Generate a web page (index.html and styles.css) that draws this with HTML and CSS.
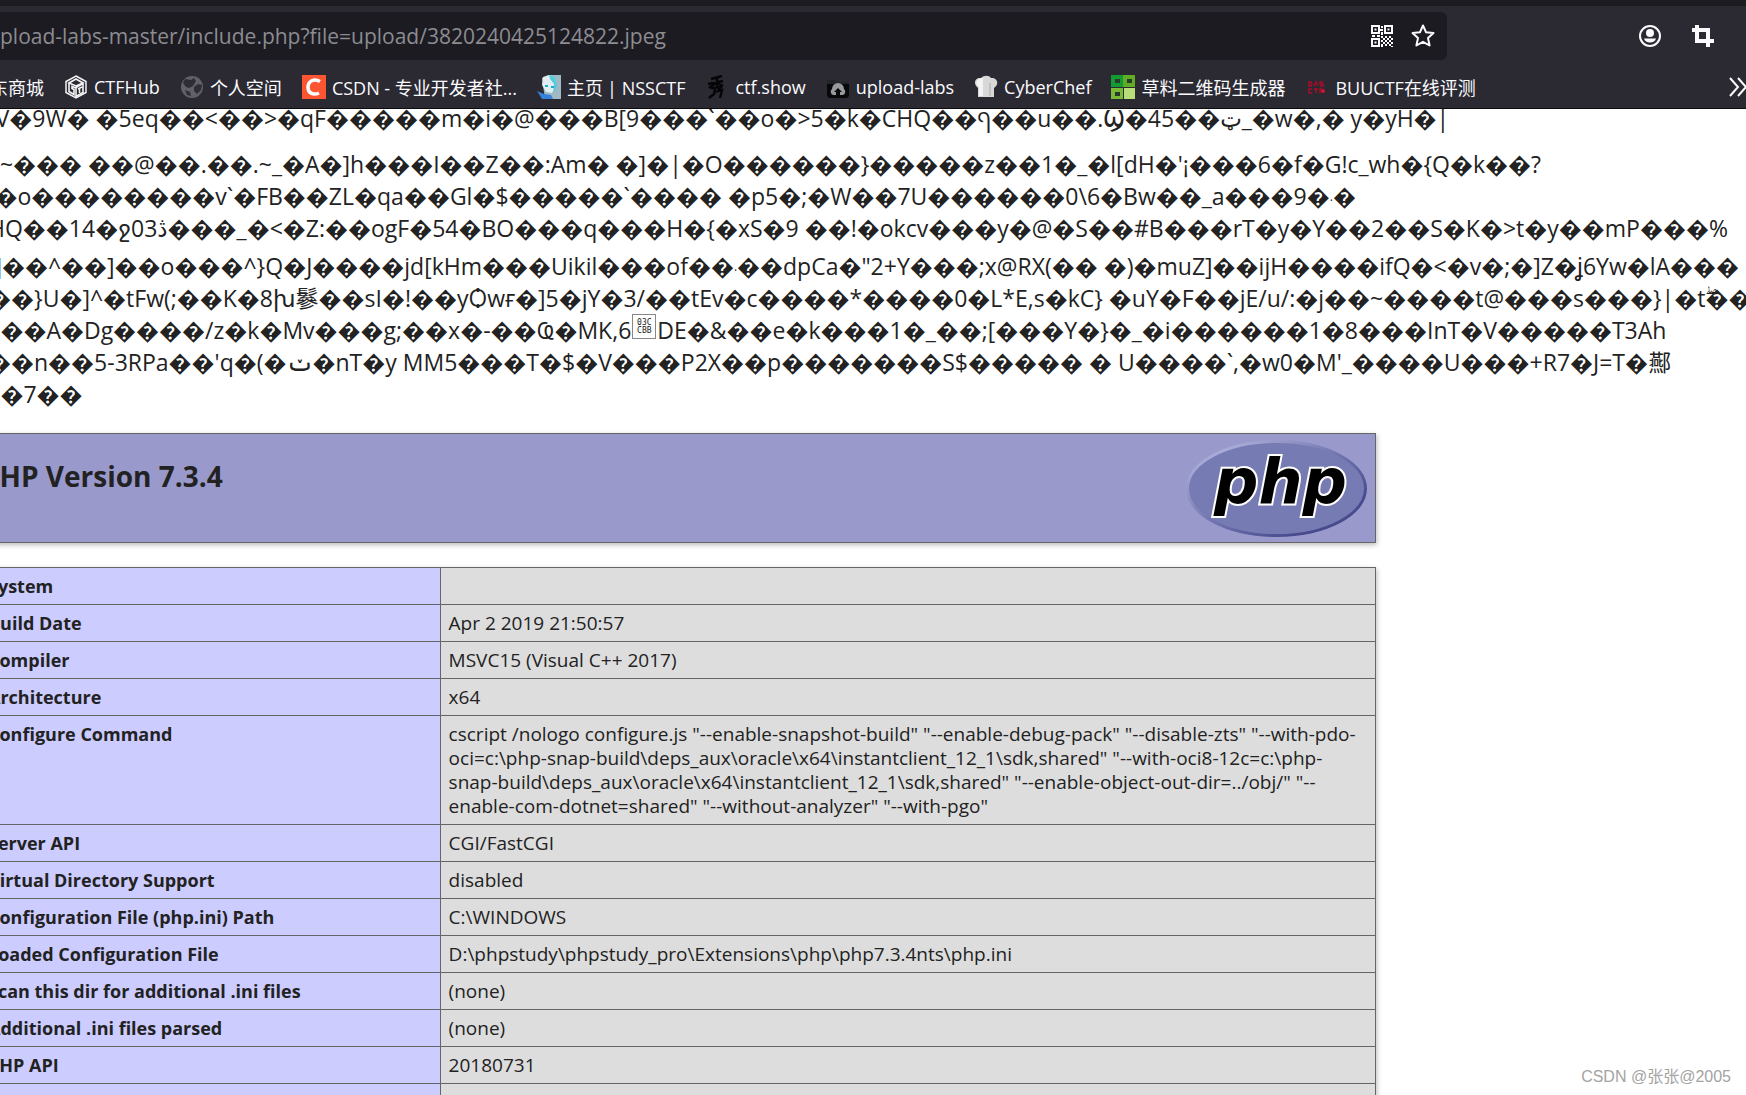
FILE: index.html
```
<!DOCTYPE html>
<html lang="zh-CN">
<head>
<meta charset="utf-8">
<title>PHP 7.3.4 - phpinfo()</title>
<link rel="stylesheet" href="styles.css">
</head>
<body>
<header class="chrome">
  <div class="tabstrip"></div>
  <div class="toolbar">
    <div class="urlbar">
      <input class="url" type="text" aria-label="Address" value="pload-labs-master/include.php?file=upload/3820240425124822.jpeg">
      <button class="tool" type="button" aria-label="QR code">
        <svg width="22" height="22" viewBox="0 0 22 22" fill="#fbfbfe" fill-rule="evenodd"><path d="M0 0h9v9H0zM2 2v5h5V2zM13 0h9v9h-9zM15 2v5h5V2zM0 13h9v9H0zM2 15v5h5v-5zM3.500 3.500h2v2h-2zM16.500 3.500h2v2h-2zM3.500 16.500h2v2h-2zM10 1h2v2h-2zM9 4h3v2H9zM10 7h2v3h-2zM1 10h3v2H1zM6 10h3v2H6zM10 11h2v2h-2zM12 13h2v2h-2zM14 11h2v2h-2zM16 13h2v2h-2zM18 11h2v2h-2zM20 13h2v2h-2zM10 15h2v2h-2zM14 15h2v2h-2zM18 15h2v2h-2zM12 17h2v2h-2zM16 17h2v2h-2zM20 17h2v2h-2zM10 19h2v3h-2zM14 19h2v2h-2zM18 19h2v2h-2zM20 21h2v1h-2z"/></svg>
      </button>
      <button class="tool" type="button" aria-label="Bookmark this page">
        <svg width="24" height="24" viewBox="0 0 24 24" fill="none" stroke="#fbfbfe" stroke-width="2" stroke-linejoin="round"><path d="M12 1.500l3.100 6.800 7.400.800-5.500 5 1.600 7.400L12 17.800l-6.600 3.700L7 14.100l-5.500-5 7.400-.800z"/></svg>
      </button>
    </div>
    <div class="actions">
      <button class="tool" type="button" aria-label="Account">
        <svg width="24" height="24" viewBox="0 0 24 24"><circle cx="12" cy="12" r="10" fill="none" stroke="#fbfbfe" stroke-width="2"/><circle cx="12" cy="9" r="4" fill="#fbfbfe"/><path d="M6 14.500h12c-.600 2.500-3 4-6 4s-5.400-1.500-6-4z" fill="#fbfbfe"/></svg>
      </button>
      <button class="tool" type="button" aria-label="Screenshot">
        <svg width="22" height="22" viewBox="0 0 22 22" fill="none" stroke="#fbfbfe" stroke-width="4"><path d="M5 0v16h17M0 5h16v17"/></svg>
      </button>
    </div>
  </div>
  <nav class="bookmarks" aria-label="Bookmarks">
    <a class="mark" href="#">东商城</a>
    <a class="mark" href="#">
      <svg width="24" height="24" viewBox="0 0 24 24" fill="none" stroke="#f4f4f6"><path d="M12 1l10 5.500v11L12 23 2 17.500v-11z" stroke-width="1.500"/><path d="M12 4l7 4-7 3-7-3zM5 8.500v8l5 3v-5l-2-1v-2l4 1.500v8.500l7-4V8.500l-7 4M14 14l4-2M15.500 13v5" stroke-width="1.600"/></svg>
      <span class="latin">CTFHub</span></a>
    <a class="mark" href="#">
      <svg width="24" height="24" viewBox="0 0 24 24"><circle cx="12" cy="12" r="11" fill="#606068"/><path d="M5 4l6 1 3-2 2 3-3 5-4 2-3-1-3-4zM14 12l4-3 4 1-1 5-4 4-3-3zM5 15l5 2 1 4-4-1z" fill="#2e2d36"/></svg>
      <span>个人空间</span></a>
    <a class="mark" href="#">
      <svg width="24" height="24" viewBox="0 0 24 24"><path d="M0 0h24v24H0z" fill="#fc5531"/><path d="M18 6.500c-6-3.500-12-.500-12 6 0 6 5.500 8 11 5.500" fill="none" stroke="#fff" stroke-width="3.500"/></svg>
      <span><span class="latin">CSDN - </span>专业开发者社<span class="latin">...</span></span></a>
    <a class="mark" href="#">
      <svg width="24" height="24" viewBox="0 0 24 24"><path d="M5 3l6-3h13v24H8z" fill="#9fb9c5"/><path d="M6 2l7-2 5 3 1 8-4 7-6-1-4-7z" fill="#e3edf1"/><path d="M12 0l6 2 2 9-4 8 1-10-4-5z" fill="#55ccdc"/><path d="M8 10h3v2H8zM14 11h3v2h-3z" fill="#18aecb"/><path d="M0 16l7 3 7 1 2 4H5z" fill="#3682da"/></svg>
      <span>主页 <span class="latin">| NSSCTF</span></span></a>
    <a class="mark" href="#">
      <svg width="24" height="24" viewBox="0 0 24 24" fill="none" stroke="#050507" stroke-width="2.400"><path d="M6 4l11-3M3 9l15-3M12 3v9M11 8l-7 5M12 8l6 3M6 13l10-1-3 4 4-1-2 8M10 14l-1 5-5 4"/></svg>
      <span class="latin">ctf.show</span></a>
    <a class="mark" href="#">
      <svg width="24" height="24" viewBox="0 0 24 24"><path d="M1 5h8l2 2h11v15H1z" fill="#222528"/><path d="M1 9h22v12l-2 2H3l-2-2z" fill="#070809"/><path d="M7 20a3.500 3.500 0 01-1-6 6 6 0 0112 0 3.500 3.500 0 01-1 6h-3v-3h2l-4-4-4 4h2v3z" fill="#989a9c"/></svg>
      <span class="latin">upload-labs</span></a>
    <a class="mark" href="#">
      <svg width="24" height="24" viewBox="0 0 24 24"><path d="M4 22V13C-2 8 2 2 7 3c3-3 8-3 10 0 6-1 9 6 3 10v9z" fill="#d8d8d8"/><path d="M9 3v18H5v-9C0 8 3 3 9 3z" fill="#f3f3f3"/><path d="M16 8v13" stroke="#aaa"/></svg>
      <span class="latin">CyberChef</span></a>
    <a class="mark" href="#">
      <svg width="24" height="24" viewBox="0 0 24 24"><path d="M0 0h12v12H0z" fill="#129b32"/><path d="M12 0h12v12H12z" fill="#61ac25"/><path d="M0 13h12v11H0z" fill="#78ba36"/><path d="M13 13h11v11H13z" fill="#b7dc78"/><path d="M4 4h5v4H4zM16 4h5v4h-5zM4 17h5v4H4z" fill="#263c29"/></svg>
      <span>草料二维码生成器</span></a>
    <a class="mark" href="#">
      <svg width="24" height="24" viewBox="0 0 24 24" fill="none" stroke="#a90d28" stroke-width="1.500"><path d="M4 7v4h2l1-2-1-2zM9 11l2-4 2 4M18 7h-3v2h3v2h-3M7 14H4v4h3M9 14h4M11 14v4M15 18v-4h3M15 16h3"/><circle cx="18" cy="16" r="1.500" fill="#ff4e64"/></svg>
      <span><span class="latin">BUUCTF</span>在线评测</span></a>
    <button class="more" type="button" aria-label="More bookmarks">
      <svg width="20" height="20" viewBox="0 0 20 20" fill="none" stroke="#fbfbfe" stroke-width="2"><path d="M2 1l8 9-8 9M10 1l8 9-8 9"/></svg>
    </button>
  </nav>
</header>
<main class="page">
  <div class="dump">
    <p>]V�9W� �5eq��&lt;��&gt;�qF�����m�i�@���B[9���`��o�&gt;5�k�CHQ��ף��u��.Ϣ�45��ټ_�w�,� y�yH�|</p>
    <p class="para">  ~��� ��@��.��.~_�A�]h���I��Z��:Am� �]�|�O������}�����z��1�_�l[dH�'¡���6�f�G!c_wh�{Q�k��?</p>
    <p>I�o��������v`�FB��ZL�qa��Gl�$�����`���� �p5�;�W��7U������0\6�Bw��_a���9�<span class="dot">·</span>�</p>
    <p>HQ��14�ջ03ڎ���_�&lt;�Z:��ogF�54�BO���q���H�{�xS�9 ��!�okcv���y�@�S��#B���rT�y�Y��2��S�K�&gt;t�y��mP���%</p>
    <p class="accent">I]��^��]��o���^}Q�J����jd[kHm���Uikil���of��<span class="dot">·</span>��dpCa�"2+Y���;x@RX(�� �)�muZ]��ijH����ifQ�&lt;�v�;�]Z�ʝ6Yw�lA���</p>
    <p>��}U�]^�tFw(;��K�8խ鬖��sI�!��yѺwғ�]5�jY�3/��tEv�c����*����0�L*E,s�kC} �uY�F��jE/u/:�j��~����t@���s���}|�tۖ��</p>
    <p>I ��A�Dg����/z�k�Mv���g;��x�-��Ҩ�MK,6<span class="hexbox">03C<br>CBB</span>DE�&amp;��e�k���1�_��;[���Y�}�_�i������1�8���InT�V�����T3Ah</p>
    <p>��n��5-3RPa��'q�(�ݖ�nT�y MM5���T�$�V���P2X��p�������S$����� � U����`,�w0�M'_����U���+R7�J=T�酀</p>
    <p>I �7��</p>
  </div>
  <div class="center">
    <div class="banner">
      <h1>PHP Version 7.3.4</h1>
      <svg class="logo" width="181" height="97" viewBox="0 0 181 97" role="img" aria-label="PHP logo">
        <defs><linearGradient id="rim" x1="0" y1="0" x2="1" y2="1"><stop offset="0.100" stop-color="#aeb2dc"/><stop offset="0.450" stop-color="#777bb3"/><stop offset="0.800" stop-color="#484a8e"/></linearGradient></defs>
        <ellipse cx="90.500" cy="48.500" rx="89" ry="47" fill="#777bb3" stroke="url(#rim)" stroke-width="3"/>
        <text class="wordmark" x="28" y="63">php</text>
      </svg>
    </div>
    <table class="info">
      <tr><th scope="row">System</th><td></td></tr>
      <tr><th scope="row">Build Date</th><td>Apr 2 2019 21:50:57</td></tr>
      <tr><th scope="row">Compiler</th><td>MSVC15 (Visual C++ 2017)</td></tr>
      <tr><th scope="row">Architecture</th><td>x64</td></tr>
      <tr><th scope="row">Configure Command</th><td>cscript /nologo configure.js "--enable-snapshot-build" "--enable-debug-pack" "--disable-zts" "--with-pdo-<br>oci=c:\php-snap-build\deps_aux\oracle\x64\instantclient_12_1\sdk,shared" "--with-oci8-12c=c:\php-<br>snap-build\deps_aux\oracle\x64\instantclient_12_1\sdk,shared" "--enable-object-out-dir=../obj/" "--<br>enable-com-dotnet=shared" "--without-analyzer" "--with-pgo"</td></tr>
      <tr><th scope="row">Server API</th><td>CGI/FastCGI</td></tr>
      <tr><th scope="row">Virtual Directory Support</th><td>disabled</td></tr>
      <tr><th scope="row">Configuration File (php.ini) Path</th><td>C:\WINDOWS</td></tr>
      <tr><th scope="row">Loaded Configuration File</th><td>D:\phpstudy\phpstudy_pro\Extensions\php\php7.3.4nts\php.ini</td></tr>
      <tr><th scope="row">Scan this dir for additional .ini files</th><td>(none)</td></tr>
      <tr><th scope="row">Additional .ini files parsed</th><td>(none)</td></tr>
      <tr><th scope="row">PHP API</th><td>20180731</td></tr>
      <tr><th scope="row"></th><td></td></tr>
    </table>
  </div>
</main>
<div class="watermark">CSDN @张张@2005</div>
</body>
</html>
```
FILE: styles.css
```
* { box-sizing: border-box; }

body {
  margin: 0;
  height: 100vh;
  overflow: hidden;
  display: flex;
  flex-direction: column;
  background: #fff;
  color: #222;
  font-family: "Open Sans", "Noto Sans", "Noto Sans CJK SC", "DejaVu Sans", sans-serif;
}

button { border: 0; padding: 0; background: none; color: inherit; }
svg { display: block; flex: none; }

/* browser chrome */
.chrome {
  flex: none;
  background: #2b2a33;
  color: #fbfbfe;
  border-bottom: 1px solid #0c0c0d;
}
.tabstrip { height: 6px; background: #1c1b22; }
.toolbar {
  display: flex;
  gap: 191px;
  padding: 6px 32px 0 0;
}
.urlbar {
  display: flex;
  align-items: center;
  gap: 18px;
  flex: 1;
  height: 48px;
  padding-right: 12px;
  background: #1c1b22;
  border-radius: 0 6px 6px 0;
}
.url {
  flex: 1;
  min-width: 0;
  border: 0;
  padding: 0;
  background: none;
  color: #8c8c91;
  font: 21px/28px "Open Sans", sans-serif;
}
.actions { display: flex; align-items: center; gap: 30px; }
.bookmarks {
  display: flex;
  align-items: center;
  gap: 20px;
  height: 48px;
  padding-top: 6px;
  overflow: hidden;
  font: 18px/24px "Noto Sans CJK SC", sans-serif;
  white-space: nowrap;
}
.mark {
  display: flex;
  align-items: center;
  gap: 6px;
  flex: none;
  color: inherit;
  text-decoration: none;
}
.mark:first-child { margin-left: -10px; }
.latin { font-family: "Open Sans", sans-serif; white-space: pre; }
.more { flex: none; margin-left: auto; margin-right: -2px; }

/* page */
.page { flex: 1; min-height: 0; overflow: hidden; }
.dump {
  margin: -7px 0 0 -12px;
  font-size: 23px;
  line-height: 32px;
}
.dump p {
  margin: 0;
  height: 32px;
  white-space: pre;
  direction: ltr;
  unicode-bidi: bidi-override;
}
.dump .para { margin-top: 14px; }
.dump .accent { margin-top: 6px; }
.dot { font-size: 12px; }
.hexbox {
  display: inline-block;
  width: 24px;
  height: 25px;
  margin: 0 1px;
  padding-top: 4px;
  border: 1px solid #888;
  vertical-align: 6px;
  font: 8px/8px "DejaVu Sans Mono", monospace;
  text-align: center;
}

.center { width: 80%; margin: 23px 0 0 -21px; }
.banner {
  display: flex;
  justify-content: space-between;
  height: 110px;
  padding: 6px 8px 6px 2px;
  border: 1px solid #666;
  background: #99c;
  box-shadow: 1px 2px 5px #bbb;
}
h1 { margin: 18px 0 0; font-size: 28px; line-height: 36px; }
.wordmark {
  font: italic bold 62px "DejaVu Sans", sans-serif;
  fill: #000;
  stroke: #fff;
  stroke-width: 4px;
  paint-order: stroke;
}
.info {
  width: 100%;
  margin-top: 24px;
  border-collapse: collapse;
  table-layout: fixed;
  box-shadow: 1px 2px 5px #bbb;
  line-height: 24px;
}
.info th, .info td {
  height: 37px;
  padding: 6px 8px;
  border: 1px solid #666;
  vertical-align: top;
  text-align: left;
}
.info th { width: 33%; background: #ccf; font-size: 18px; }
.info td { background: #ddd; font-size: 19px; }

.watermark {
  position: absolute;
  right: 15px;
  bottom: 6px;
  color: #a3a3a3;
  font: 16px/24px "Liberation Sans", "Noto Sans CJK SC", sans-serif;
}
```
